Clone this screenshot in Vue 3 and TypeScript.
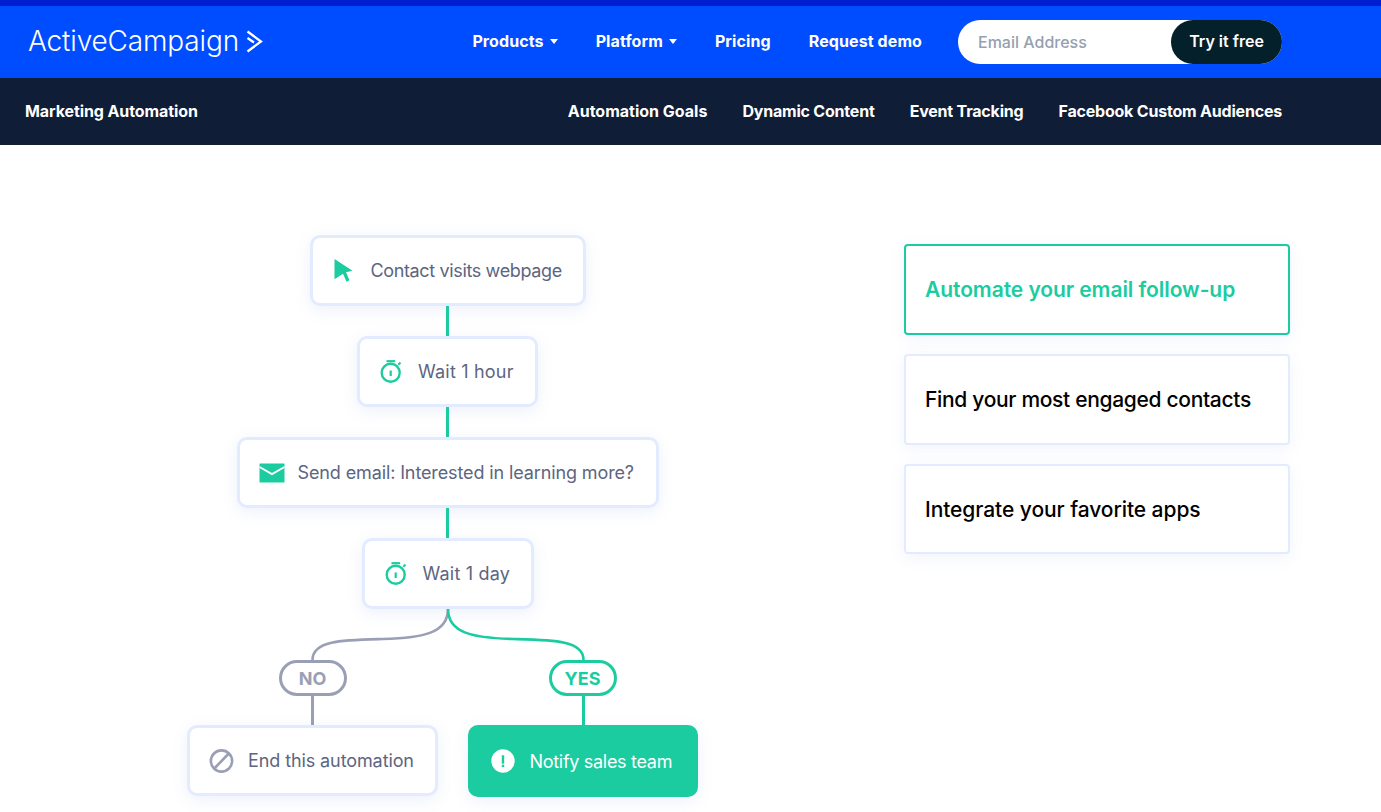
<script setup lang="ts">
const mainNav = [
  { label: 'Products', caret: true },
  { label: 'Platform', caret: true },
  { label: 'Pricing', caret: false },
  { label: 'Request demo', caret: false },
]

const subNav = ['Automation Goals', 'Dynamic Content', 'Event Tracking', 'Facebook Custom Audiences']

const tabs = [
  { label: 'Automate your email follow-up', cls: 'tab-automate active' },
  { label: 'Find your most engaged contacts', cls: 'tab-find' },
  { label: 'Integrate your favorite apps', cls: 'tab-integrate' },
]
</script>

<template>
  <div class="page">
    <header class="topbar">
      <a class="logo">
        <span class="logo-word">ActiveCampaign</span>
        <svg class="logo-mark" width="17" height="24" viewBox="0 0 17 24" fill="none" stroke="#fff" stroke-width="2.3">
          <path d="M1.5 1.5 L15 11.5 L1.5 21.5" />
          <path d="M1.5 8 L8 12.5" />
        </svg>
      </a>
      <nav class="main-nav">
        <a v-for="item in mainNav" :key="item.label" class="main-link">
          {{ item.label }}
          <span v-if="item.caret" class="caret"></span>
        </a>
      </nav>
      <form class="signup" @submit.prevent>
        <span class="signup-input">Email Address</span>
        <button class="signup-btn">Try it free</button>
      </form>
    </header>

    <div class="subbar">
      <span class="sub-title">Marketing Automation</span>
      <nav class="sub-nav">
        <a v-for="item in subNav" :key="item" class="sub-link">{{ item }}</a>
      </nav>
    </div>

    <main class="content">
      <section class="flow">
        <div class="node node-visit">
          <span class="node-icon">
            <svg width="26" height="26" viewBox="0 0 26 26">
              <path fill="#1bcca0" d="M2.5 1 L20.5 12.7 L14 14.2 L17.5 22.2 L14.5 23.8 L11 15.8 L2.5 21.3 Z" />
            </svg>
          </span>
          <span>Contact visits webpage</span>
        </div>
        <div class="line"></div>
        <div class="node node-hour">
          <span class="node-icon">
            <svg width="26" height="26" viewBox="0 0 26 26" fill="none" stroke="#1bcca0">
              <circle cx="11.7" cy="13.8" r="9" stroke-width="2.4" />
              <path d="M7.5 2.2 H16.2" stroke-width="2.2" />
              <path d="M19.3 5.7 L21.5 3.5" stroke-width="2" />
              <path d="M11.7 11.5 V17" stroke-width="2.2" />
            </svg>
          </span>
          <span>Wait 1 hour</span>
        </div>
        <div class="line"></div>
        <div class="node node-email">
          <span class="node-icon">
            <svg width="26" height="20" viewBox="0 0 26 20">
              <rect x="0.5" y="0.5" width="25" height="19" rx="0.5" fill="#1bcca0" />
              <path d="M0.5 4 L13 11 L25.5 4" fill="none" stroke="#fff" stroke-width="2" />
            </svg>
          </span>
          <span>Send email: Interested in learning more?</span>
        </div>
        <div class="line"></div>
        <div class="node node-day">
          <span class="node-icon">
            <svg width="26" height="26" viewBox="0 0 26 26" fill="none" stroke="#1bcca0">
              <circle cx="11.7" cy="13.8" r="9" stroke-width="2.4" />
              <path d="M7.5 2.2 H16.2" stroke-width="2.2" />
              <path d="M19.3 5.7 L21.5 3.5" stroke-width="2" />
              <path d="M11.7 11.5 V17" stroke-width="2.2" />
            </svg>
          </span>
          <span>Wait 1 day</span>
        </div>

        <svg class="fork" width="540" height="51" viewBox="0 0 540 51" fill="none" stroke-width="2.6">
          <path stroke="#9a9fb5" d="M270 0 C270 24 245 29 205 30 C165 31 134.5 31 134.5 51" />
          <path stroke="#1bcca0" d="M270 0 C270 24 295 29 335 30 C375 31 405.5 31 405.5 51" />
        </svg>

        <div class="branches">
          <div class="branch">
            <span class="pill pill-no">NO</span>
            <div class="line line-no"></div>
            <div class="node node-end">
              <span class="node-icon">
                <svg width="26" height="26" viewBox="0 0 26 26" fill="none" stroke="#9a9fb5" stroke-width="2.6">
                  <circle cx="12.5" cy="13" r="10.6" />
                  <path d="M5.3 20.5 L19.8 5.5" />
                </svg>
              </span>
              <span>End this automation</span>
            </div>
          </div>
          <div class="branch">
            <span class="pill pill-yes">YES</span>
            <div class="line line-yes"></div>
            <div class="node node-notify">
              <span class="node-icon">
                <svg width="26" height="26" viewBox="0 0 26 26">
                  <circle cx="12" cy="13" r="11.7" fill="#fff" />
                  <rect x="10.8" y="7.3" width="2.4" height="8.4" fill="#1bcca0" />
                  <rect x="10.8" y="16.7" width="2.4" height="2.4" fill="#1bcca0" />
                </svg>
              </span>
              <span>Notify sales team</span>
            </div>
          </div>
        </div>
      </section>

      <aside class="tabs">
        <button v-for="tab in tabs" :key="tab.label" :class="['tab', tab.cls]">{{ tab.label }}</button>
      </aside>
    </main>
  </div>
</template>

<style>
html,
body {
  margin: 0;
  background: #fff;
  overflow: hidden;
}
</style>

<style scoped>
.page {
  font-family: "Inter", "Noto Sans", sans-serif;
  height: 812px;
  overflow: hidden;
}

.topbar {
  display: flex;
  align-items: center;
  height: 72px;
  border-top: 6px solid #001fce;
  background: #004cff;
  padding: 0 99px 0 28px;
}

.logo {
  display: flex;
  align-items: center;
  gap: 7px;
  color: #fff;
}

.logo-word {
  font-weight: 300;
  font-size: 28px;
  line-height: 1;
  letter-spacing: -0.15px;
  margin-top: -2px;
}

.logo-mark {
  display: block;
  margin-top: -1px;
}

.main-nav {
  display: flex;
  align-items: center;
  gap: 38px;
  margin-left: auto;
}

.main-link {
  display: flex;
  align-items: center;
  gap: 6px;
  color: #fff;
  font-size: 16px;
  font-weight: 700;
  letter-spacing: 0.1px;
  margin-top: -2px;
}

.caret {
  width: 0;
  height: 0;
  border-left: 4px solid transparent;
  border-right: 4px solid transparent;
  border-top: 5px solid #fff;
}

.signup {
  display: flex;
  align-items: center;
  justify-content: space-between;
  width: 324px;
  height: 44px;
  margin: 0 0 0 36px;
  border-radius: 22px;
  background: #fff;
}

.signup-input {
  padding-left: 20px;
  color: #95a0b0;
  font-size: 16px;
  font-weight: 500;
}

.signup-btn {
  width: 111px;
  height: 44px;
  padding: 0 0 2px;
  border: 0;
  border-radius: 22px;
  background: #03202b;
  color: #fff;
  font-family: inherit;
  font-size: 16px;
  font-weight: 600;
}

.subbar {
  display: flex;
  align-items: center;
  justify-content: space-between;
  height: 65px;
  padding: 0 99px 2px 25px;
  background: #0f1d36;
  color: #fff;
  font-size: 16px;
  font-weight: 700;
  letter-spacing: -0.2px;
}

.sub-title {
  letter-spacing: -0.1px;
}

.sub-nav {
  display: flex;
  gap: 35px;
}

.sub-link:first-child {
  letter-spacing: 0;
}

.content {
  display: flex;
  align-items: flex-start;
  gap: 186.5px;
  padding: 90px 0 0 177.5px;
}

.flow {
  display: flex;
  flex-direction: column;
  align-items: center;
  width: 540px;
}

.node {
  box-sizing: border-box;
  display: flex;
  align-items: center;
  gap: 13px;
  height: 71px;
  padding-left: 19px;
  border: 3px solid #e3ebfe;
  border-radius: 10px;
  background: #fff;
  box-shadow: 0 4px 16px rgba(90, 120, 220, 0.1);
  color: #5d6580;
  font-size: 18px;
  white-space: nowrap;
}

.node-icon {
  display: flex;
  justify-content: center;
  width: 26px;
  flex: none;
}

.node-visit {
  width: 276px;
  letter-spacing: -0.36px;
}

.node-hour {
  width: 181px;
  letter-spacing: 0.2px;
}

.node-email {
  width: 422px;
  letter-spacing: -0.12px;
}

.node-day {
  width: 172px;
  letter-spacing: 0.2px;
}

.node-end {
  width: 251px;
  letter-spacing: -0.1px;
}

.node-notify {
  width: 230px;
  height: 72px;
  padding-left: 20px;
  border-color: #1bcca0;
  background: #1bcca0;
  color: #fff;
  letter-spacing: -0.3px;
}

.line {
  width: 3px;
  height: 30px;
  background: #1bcca0;
}

.fork {
  display: block;
}

.branches {
  display: grid;
  grid-template-columns: 270px 270px;
  width: 540px;
}

.branch {
  display: flex;
  flex-direction: column;
  align-items: center;
}

.pill {
  box-sizing: border-box;
  display: flex;
  align-items: center;
  justify-content: center;
  width: 68px;
  height: 36px;
  border: 3px solid;
  border-radius: 18px;
  background: #fff;
  font-size: 18px;
  font-weight: 700;
}

.pill-no {
  border-color: #9a9fb5;
  color: #9a9fb5;
}

.pill-yes {
  border-color: #1bcca0;
  color: #1bcca0;
}

.line-no {
  height: 29px;
  background: #9a9fb5;
}

.line-yes {
  height: 29px;
  margin-left: 1px;
}

.tabs {
  display: flex;
  flex-direction: column;
  gap: 19.5px;
  width: 386px;
  margin-top: 9px;
}

.tab {
  box-sizing: border-box;
  height: 90.5px;
  padding: 0 0 0 19px;
  border: 2px solid #e3ebfe;
  border-radius: 4px;
  background: #fff;
  box-shadow: 0 4px 16px rgba(90, 120, 220, 0.08);
  color: #000;
  font-family: inherit;
  font-size: 21px;
  font-weight: 500;
  text-align: left;
}

.tab-automate {
  font-weight: 600;
  letter-spacing: -0.07px;
}

.tab-find {
  letter-spacing: -0.32px;
}

.tab-integrate {
  height: 90px;
  letter-spacing: -0.07px;
}

.tab.active {
  border-color: #1bcca0;
  color: #1bcca0;
}
</style>
